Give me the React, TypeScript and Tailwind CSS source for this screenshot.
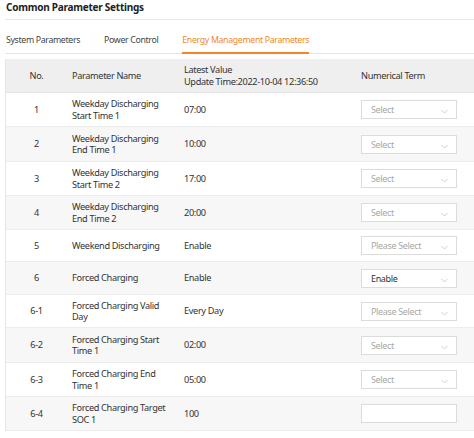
type Row = {
  no: string
  name: string[]
  value: string
  term: "select" | "please" | "enable" | "input"
  h: string
  bg: string
}

const rows: Row[] = [
  { no: "1", name: ["Weekday Discharging", "Start Time 1"], value: "07:00", term: "select", h: "h-[34px]", bg: "bg-white" },
  { no: "2", name: ["Weekday Discharging", "End Time 1"], value: "10:00", term: "select", h: "h-[35px]", bg: "bg-[#f7f7f7]" },
  { no: "3", name: ["Weekday Discharging", "Start Time 2"], value: "17:00", term: "select", h: "h-[34px]", bg: "bg-white" },
  { no: "4", name: ["Weekday Discharging", "End Time 2"], value: "20:00", term: "select", h: "h-[34px]", bg: "bg-[#f7f7f7]" },
  { no: "5", name: ["Weekend Discharging"], value: "Enable", term: "please", h: "h-[32px]", bg: "bg-white" },
  { no: "6", name: ["Forced Charging"], value: "Enable", term: "enable", h: "h-[33px]", bg: "bg-[#f7f7f7]" },
  { no: "6-1", name: ["Forced Charging Valid", "Day"], value: "Every Day", term: "please", h: "h-[33px]", bg: "bg-white" },
  { no: "6-2", name: ["Forced Charging Start", "Time 1"], value: "02:00", term: "select", h: "h-[35px]", bg: "bg-[#f7f7f7]" },
  { no: "6-3", name: ["Forced Charging End", "Time 1"], value: "05:00", term: "select", h: "h-[34px]", bg: "bg-white" },
  { no: "6-4", name: ["Forced Charging Target", "SOC 1"], value: "100", term: "input", h: "h-[34px]", bg: "bg-[#f7f7f7]" },
]

function Chevron() {
  return (
    <svg width="7" height="5" viewBox="0 0 7 5" className="absolute right-[8px] top-[8px]">
      <path d="M0.5 1 L3.5 4 L6.5 1" fill="none" stroke="#c8c8c8" strokeWidth="0.9" />
    </svg>
  )
}

function Term({ term }: { term: Row["term"] }) {
  if (term === "input") {
    return <div className="w-[96px] h-[19px] border border-[#dcdcdc] bg-white"></div>
  }
  const label = term === "select" ? "Select" : term === "please" ? "Please Select" : "Enable"
  const color = term === "enable" ? "text-[#333]" : "text-[#a8a8a8]"
  return (
    <div className="relative w-[96px] h-[19px] border border-[#dcdcdc] bg-white flex items-center pl-[9px]">
      <span className={`text-[9px] leading-none ${color}`}>{label}</span>
      <Chevron />
    </div>
  )
}

export default function App() {
  return (
    <div className="w-[474px] h-[438px] overflow-hidden bg-white text-[#333] [font-family:'Noto_Sans','Open_Sans',sans-serif] tracking-[-0.35px]">
      <div className="pl-[6px] pt-[1px] h-[19px] text-[10px] leading-[13px] font-bold text-[#222] tracking-[-0.25px]">Common Parameter Settings</div>
      <div className="ml-[5px] border-t border-[#e8e8e8]"></div>
      <div className="ml-[5px] mt-[14px] flex text-[8.8px] leading-[12px] border-b border-[#e4e4e4]">
        <div className="pb-[7px] pl-[1px] text-[#444]">System Parameters</div>
        <div className="pb-[7px] ml-[24px] text-[#444]">Power Control</div>
        <div className="pb-[6px] ml-[24px] text-[#f0882a] border-b-2 border-[#f0882a] -mb-[1px]">Energy Management Parameters</div>
      </div>
      <div className="ml-[5px] mt-[5px] border-l border-[#e6e6e6] text-[9.2px] leading-[11.5px]">
        <div className="flex items-center h-[34px] bg-[#efefef] border-b border-[#e6e6e6]">
          <div className="w-[61px] text-center">No.</div>
          <div className="w-[112px] pl-[5px]">Parameter Name</div>
          <div className="w-[177px] pl-[5px] whitespace-nowrap">
            <div>Latest Value</div>
            <div>Update Time:2022-10-04 12:36:50</div>
          </div>
          <div className="pl-[5px]">Numerical Term</div>
        </div>
        {rows.map((r) => (
          <div key={r.no} className={`flex items-center ${r.h} ${r.bg} border-b border-[#ececec]`}>
            <div className="w-[61px] text-center">{r.no}</div>
            <div className="w-[112px] pl-[5px] whitespace-nowrap">
              {r.name.map((n) => (
                <div key={n}>{n}</div>
              ))}
            </div>
            <div className="w-[177px] pl-[5px]">{r.value}</div>
            <div className="pl-[5px]">
              <Term term={r.term} />
            </div>
          </div>
        ))}
      </div>
    </div>
  )
}
